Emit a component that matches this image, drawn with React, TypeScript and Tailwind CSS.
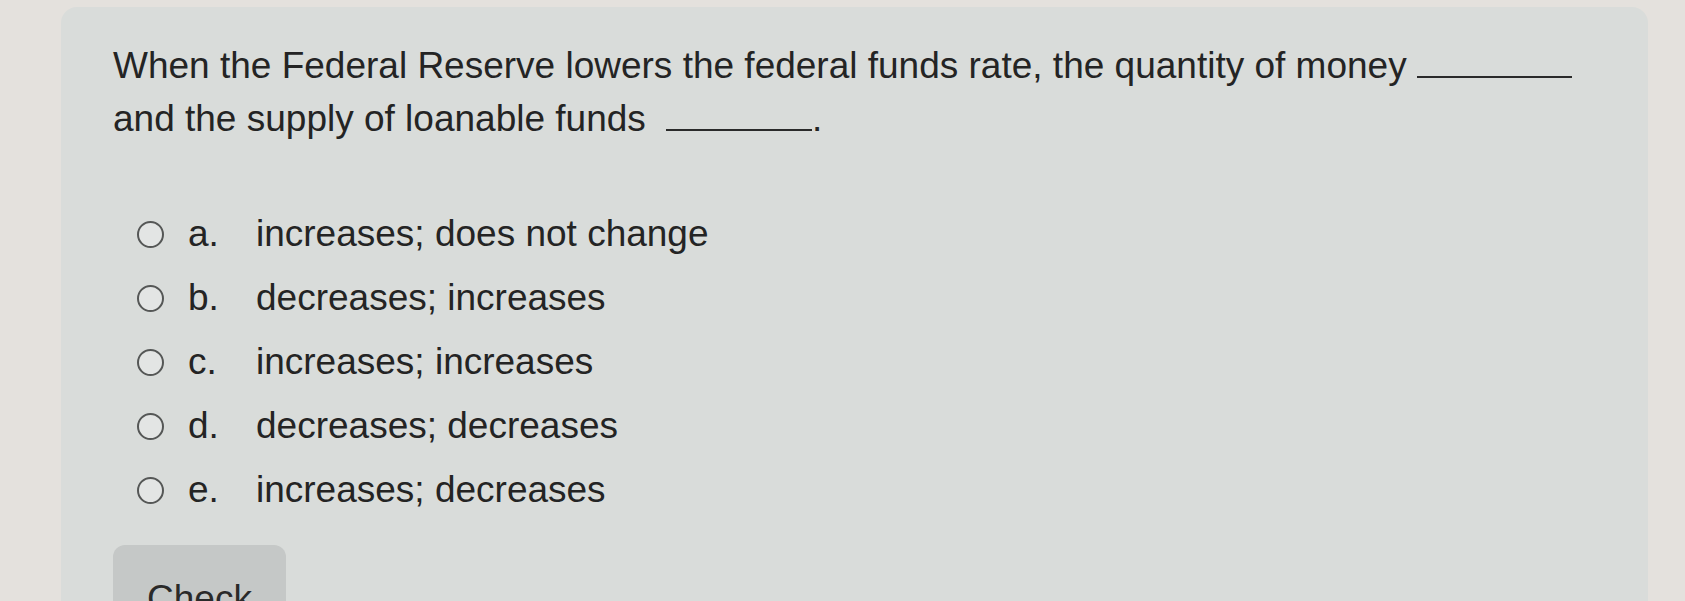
import React from "react";

const options = [
  { key: "a.", text: "increases; does not change" },
  { key: "b.", text: "decreases; increases" },
  { key: "c.", text: "increases; increases" },
  { key: "d.", text: "decreases; decreases" },
  { key: "e.", text: "increases; decreases" },
];

function Blank({ w }: { w: string }) {
  return <span className={`inline-block border-b-2 border-[#2a2a2a] align-baseline ${w}`} />;
}

export default function App() {
  return (
    <div
      className="w-full h-[601px] overflow-hidden bg-[#e4e1dd] pt-[7px] pl-[61px] pr-[37px] text-[#242424]"
      style={{ fontFamily: '"Liberation Sans", Arial, sans-serif' }}
    >
      <div className="h-[640px] rounded-[16px] bg-[#d9dcda] pl-[52px] pt-[32px]">
        <div className="text-[37px] leading-[53px]">
          <div>
            When the Federal Reserve lowers the federal funds rate, the quantity of money <Blank w="w-[155px]" />
          </div>
          <div>
            and the supply of loanable funds <Blank w="ml-[10px] w-[146px]" />.
          </div>
        </div>

        <div className="mt-[57px] flex flex-col">
          {options.map((o) => (
            <label key={o.key} className="flex h-[64px] items-center text-[37px]">
              <span className="ml-[24px] h-[27px] w-[27px] shrink-0 rounded-full border-[2.5px] border-[#555756] bg-[#e3e5e4]" />
              <span className="ml-[24px] w-[68px]">{o.key}</span>
              <span>{o.text}</span>
            </label>
          ))}
        </div>

        <button className="mt-[23px] h-[90px] rounded-[12px] bg-[#c5c8c7] px-[34px] pt-[16px] text-left text-[37px] leading-[53px] text-[#2a2a2a]">
          Check
        </button>
      </div>
    </div>
  );
}
